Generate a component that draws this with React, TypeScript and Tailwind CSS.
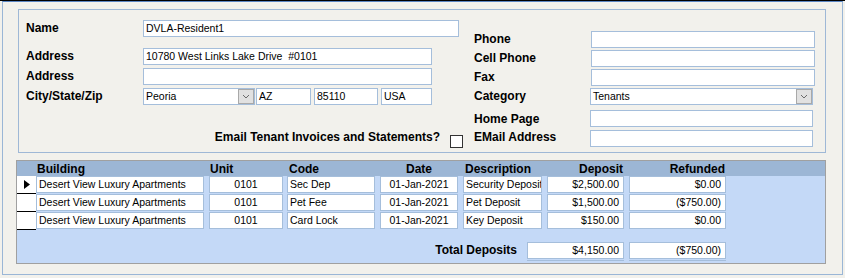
import React from 'react';

// tenant deposit form, Access-style
const font = "font-['Liberation_Sans',Arial,sans-serif]";

function Box({ className = '', value = '', align = 'left' }: { className?: string; value?: string; align?: 'left' | 'right' | 'center' }) {
  const a = align === 'right' ? 'justify-end pr-[4px]' : align === 'center' ? 'justify-center' : 'justify-start pl-[2px]';
  return (
    <div className={`h-[17px] flex items-center bg-white border border-[#a5bedb] text-[10.5px] text-black whitespace-pre overflow-hidden ${a} ${className}`}>
      {value}
    </div>
  );
}

function Combo({ className = '', value }: { className?: string; value: string }) {
  return (
    <div className={`h-[17px] flex items-center bg-white border border-[#a5bedb] text-[10.5px] text-black ${className}`}>
      <span className="pl-[2px] flex-1">{value}</span>
      <span className="w-[16px] h-[15px] flex items-center justify-center bg-[#e1e1e1] border border-[#a9a9a9]">
        <svg width="8" height="5" viewBox="0 0 8 5">
          <path d="M1 1 L4 4 L7 1" fill="none" stroke="#6b6b6b" strokeWidth="1" />
        </svg>
      </span>
    </div>
  );
}

function Label({ children, className = '' }: { children: React.ReactNode; className?: string }) {
  return <span className={`text-[12px] font-bold text-black leading-none ${className}`}>{children}</span>;
}

const rows = [
  { code: 'Sec Dep', desc: 'Security Deposit', dep: '$2,500.00', ref: '$0.00' },
  { code: 'Pet Fee', desc: 'Pet Deposit', dep: '$1,500.00', ref: '($750.00)' },
  { code: 'Card Lock', desc: 'Key Deposit', dep: '$150.00', ref: '$0.00' },
];

export default function App() {
  return (
    <div className={`w-[845px] h-[278px] bg-[#f2f1ec] border-t border-black ${font}`}>
      <div className="ml-[2px] w-[841px] h-[274px] border border-[#9ab6d6] border-t-[#5b86c4]">
        {/* top panel */}
        <div className="ml-[15px] mt-[7px] w-[808px] h-[144px] border border-[#9fb8d6] flex">
          <div className="w-[455px] pl-[7px] pt-[10px]">
            <div className="flex items-center">
              <Label className="w-[117px] -mt-[1px]">Name</Label>
              <Box className="w-[316px]" value="DVLA-Resident1" />
            </div>
            <div className="flex items-center mt-[11px]">
              <Label className="w-[117px] -mt-[1px]">Address</Label>
              <Box className="w-[289px]" value="10780 West Links Lake Drive  #0101" />
            </div>
            <div className="flex items-center mt-[3px]">
              <Label className="w-[117px] -mt-[1px]">Address</Label>
              <Box className="w-[289px]" />
            </div>
            <div className="flex items-center mt-[3px]">
              <Label className="w-[117px] -mt-[1px]">City/State/Zip</Label>
              <Combo className="w-[112px]" value="Peoria" />
              <Box className="w-[55px] ml-[1px]" value="AZ" />
              <Box className="w-[64px] ml-[3px]" value="85110" />
              <Box className="w-[51px] ml-[3px]" value="USA" />
            </div>
            <div className="flex items-center justify-end mt-[30px] pr-[11px]">
              <Label className="-mt-[9px]">Email Tenant Invoices and Statements?</Label>
              <span className="ml-[10px] w-[13px] h-[13px] bg-white border border-[#333]" />
            </div>
          </div>
          <div className="pt-[21px]">
            <div className="flex items-center">
              <Label className="w-[117px] -mt-[1px]">Phone</Label>
              <Box className="w-[224px]" />
            </div>
            <div className="flex items-center mt-[2px]">
              <Label className="w-[117px] -mt-[1px]">Cell Phone</Label>
              <Box className="w-[224px]" />
            </div>
            <div className="flex items-center mt-[2px]">
              <Label className="w-[117px] -mt-[1px]">Fax</Label>
              <Box className="w-[224px]" />
            </div>
            <div className="flex items-center mt-[2px]">
              <Label className="w-[116px] -mt-[1px]">Category</Label>
              <Combo className="w-[223px]" value="Tenants" />
            </div>
            <div className="flex items-center mt-[5px]">
              <Label className="w-[116px]">Home Page</Label>
              <Box className="w-[223px]" />
            </div>
            <div className="flex items-center mt-[3px]">
              <Label className="w-[116px] -mt-[3px]">EMail Address</Label>
              <Box className="w-[223px]" />
            </div>
          </div>
        </div>

        {/* deposits grid */}
        <div className="ml-[13px] mt-[7px] w-[810px] h-[104px] border border-[#a0a0a0] bg-[#c4d9f7]">
          <div className="h-[15px] bg-[#9cb6d5] flex items-center text-[12px] font-bold text-black">
            <span className="w-[19px]" />
            <span className="w-[168px] pl-[1px]">Building</span>
            <span className="w-[74px] ml-[5px] pl-[1px]">Unit</span>
            <span className="w-[88px] ml-[4px] pl-[2px]">Code</span>
            <span className="w-[78px] ml-[5px] text-center">Date</span>
            <span className="w-[79px] ml-[5px] pl-[2px]">Description</span>
            <span className="w-[77px] ml-[5px] text-right pr-[1px]">Deposit</span>
            <span className="w-[97px] ml-[5px] text-right pr-[1px]">Refunded</span>
          </div>
          {rows.map((r, i) => (
            <div key={r.code} className="flex h-[18px]">
              <div className="w-[19px] h-[18px] bg-white border-b border-black flex items-center justify-center">
                {i === 0 && (
                  <svg width="6" height="9" viewBox="0 0 6 9">
                    <path d="M0 0 L6 4.5 L0 9 Z" fill="#000" />
                  </svg>
                )}
              </div>
              <Box className="w-[168px]" value="Desert View Luxury Apartments" />
              <Box className="w-[74px] ml-[5px]" value="0101" align="center" />
              <Box className="w-[88px] ml-[4px]" value={r.code} />
              <Box className="w-[78px] ml-[5px]" value="01-Jan-2021" align="center" />
              <Box className="w-[79px] ml-[5px]" value={r.desc} />
              <Box className="w-[77px] ml-[5px]" value={r.dep} align="right" />
              <Box className="w-[97px] ml-[5px]" value={r.ref} align="right" />
            </div>
          ))}
          <div className="flex items-start mt-[12px]">
            <div className="w-[500px] flex justify-end pt-[2px]">
              <Label>Total Deposits</Label>
            </div>
            <div className="ml-[10px]">
              <Box className="w-[97px]" value="$4,150.00" align="right" />
              <div className="mt-[1px] h-px w-[97px] bg-[#a5bedb]" />
            </div>
            <div className="ml-[5px]">
              <Box className="w-[97px]" value="($750.00)" align="right" />
              <div className="mt-[1px] h-px w-[97px] bg-[#a5bedb]" />
            </div>
          </div>
        </div>
      </div>
    </div>
  );
}
